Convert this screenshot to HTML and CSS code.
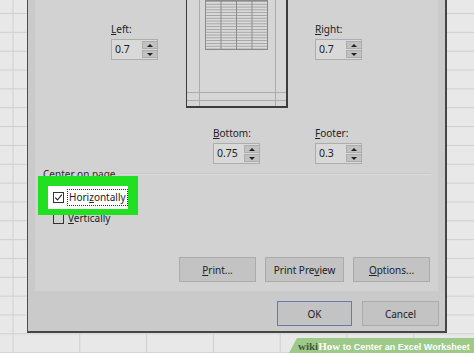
FILE: index.html
```html
<!DOCTYPE html>
<html lang="en">
<head>
    <meta charset="UTF-8">
    <meta name="viewport" content="width=device-width, initial-scale=1.0">
    <title>Page Setup - Margins</title>
    <link rel="stylesheet" href="styles.css">
</head>
<body>
    <div class="dialog">
        <div class="panel">
            <div class="row-top">
                <div class="spin spin-left">
                    <div class="spin-label"><u>L</u>eft:</div>
                    <div class="spin-box">
                        <span class="spin-value">0.7</span>
                        <span class="spin-btns"><span class="spin-up"></span><span class="spin-down"></span></span>
                    </div>
                </div>
                <div class="preview">
                    <div class="sheet"></div>
                </div>
                <div class="spin spin-right">
                    <div class="spin-label"><u>R</u>ight:</div>
                    <div class="spin-box">
                        <span class="spin-value">0.7</span>
                        <span class="spin-btns"><span class="spin-up"></span><span class="spin-down"></span></span>
                    </div>
                </div>
            </div>
            <div class="row-mid">
                <div class="spin spin-bottom">
                    <div class="spin-label"><u>B</u>ottom:</div>
                    <div class="spin-box">
                        <span class="spin-value">0.75</span>
                        <span class="spin-btns"><span class="spin-up"></span><span class="spin-down"></span></span>
                    </div>
                </div>
                <div class="spin spin-footer">
                    <div class="spin-label"><u>F</u>ooter:</div>
                    <div class="spin-box">
                        <span class="spin-value">0.3</span>
                        <span class="spin-btns"><span class="spin-up"></span><span class="spin-down"></span></span>
                    </div>
                </div>
            </div>
            <div class="group-head">
                <span class="group-title">Center on page</span>
                <span class="group-line"></span>
            </div>
            <div class="highlight">
                <div class="check-row">
                    <span class="checkbox">
                        <svg width="9" height="9" viewBox="0 0 9 9"><polyline points="1.2,4.6 3.5,7 7.8,1.6" fill="none" stroke="#222" stroke-width="1.1"/></svg>
                    </span>
                    <span class="check-label focused">Hori<u>z</u>ontally</span>
                </div>
            </div>
            <div class="check-row check-vertical">
                <span class="checkbox"></span>
                <span class="check-label"><u>V</u>ertically</span>
            </div>
            <div class="button-row">
                <button class="btn btn-print"><u>P</u>rint...</button>
                <button class="btn btn-preview">Print Pre<u>v</u>iew</button>
                <button class="btn btn-options"><u>O</u>ptions...</button>
            </div>
        </div>
        <div class="footer">
            <button class="btn btn-ok">OK</button>
            <button class="btn btn-cancel">Cancel</button>
        </div>
    </div>
    <div class="banner">
        <span class="brand-wiki">wiki</span><span class="brand-how">How</span>
        <span class="banner-title">to Center an Excel Worksheet</span>
    </div>
</body>
</html>
```

FILE: styles.css
```css
body {
    margin: 0;
    width: 474px;
    height: 353px;
    overflow: hidden;
    position: relative;
    font-family: "Noto Sans", sans-serif;
    font-size: 10px;
    color: #222;
    background-color: #e8e8e8;
    background-image:
        linear-gradient(to right, #cfcfcf 1px, transparent 1px),
        linear-gradient(to bottom, #cfcfcf 1px, transparent 1px);
    background-size: 66.8px 18.85px;
    background-position: 12.5px 13px;
}
u {
    text-decoration-thickness: 1px;
    text-underline-offset: 1px;
}
.dialog {
    margin: -20px 0 0 27px;
    width: 417px;
    background-color: #cacaca;
    border-left: 1px solid #4e4e4e;
    border-right: 2px solid #464646;
    border-bottom: 2px solid #464646;
}
.panel {
    margin: 0 7px;
    padding-bottom: 9px;
    background-color: #d2d2d2;
}
.row-top {
    display: flex;
    align-items: flex-start;
    height: 128px;
}
.spin {
    width: 47px;
}
.spin-label {
    line-height: 14px;
    height: 14px;
    margin-bottom: 3px;
    white-space: nowrap;
}
.spin-box {
    display: flex;
    box-sizing: border-box;
    height: 21px;
    border: 1px solid #adadad;
    background-color: #d9d9d9;
}
.spin-value {
    flex: 1;
    padding-left: 3px;
    line-height: 19px;
    font-size: 10.5px;
}
.spin-btns {
    width: 15px;
    display: flex;
    flex-direction: column;
    gap: 1px;
    padding: 1px 0;
}
.spin-up, .spin-down {
    flex: 1;
    display: flex;
    align-items: center;
    justify-content: center;
    background-color: #c1c1c1;
    border: 1px solid #adadad;
    border-right: none;
}
.spin-up::after, .spin-down::after {
    content: "";
    width: 0;
    height: 0;
    border-left: 3px solid transparent;
    border-right: 3px solid transparent;
}
.spin-up::after {
    border-bottom: 3px solid #222;
}
.spin-down::after {
    border-top: 3px solid #222;
}
.spin-left {
    margin: 42px 0 0 76px;
}
.spin-right {
    margin: 42px 0 0 27px;
}
.preview {
    box-sizing: border-box;
    width: 102px;
    height: 128px;
    margin-left: 28px;
    border-left: 1px solid #3c3c3c;
    border-right: 2px solid #3c3c3c;
    border-bottom: 2px solid #3c3c3c;
    background:
        linear-gradient(#acacac, #acacac) 12px 0 / 1px 100% no-repeat,
        linear-gradient(#acacac, #acacac) 88px 0 / 1px 100% no-repeat,
        linear-gradient(#acacac, #acacac) 0 112px / 100% 1px no-repeat,
        linear-gradient(#acacac, #acacac) 0 120px / 100% 1px no-repeat,
        #d6d6d6;
}
.sheet {
    box-sizing: border-box;
    width: 63px;
    height: 51px;
    margin: 19px 0 0 18px;
    border-top: 2px solid #8a8a8a;
    border-right: 1px solid #8a8a8a;
    border-bottom: 1px solid #8a8a8a;
    background-color: #dadada;
    background-image:
        linear-gradient(to right, #8c8c8c 1px, transparent 1px),
        linear-gradient(to bottom, #a2a2a2 1px, transparent 1px);
    background-size: 15.5px 100%, 100% 2.8px;
}
.row-mid {
    display: flex;
    margin-top: 18px;
}
.spin-bottom {
    margin-left: 178px;
}
.spin-footer {
    margin-left: 55px;
}
.group-head {
    display: flex;
    align-items: center;
    margin-top: 3px;
    height: 14px;
    padding-left: 8px;
}
.group-title {
    line-height: 14px;
    color: #2a2a2a;
}
.group-line {
    flex: 1;
    margin: 0 7px 0 4px;
    border-top: 1px solid #c6c6c6;
    border-bottom: 1px solid #dcdcdc;
}
.highlight {
    position: relative;
    z-index: 1;
    width: 80px;
    height: 23px;
    margin: -5px 0 0 3px;
    border: 10px solid #21e021;
    border-bottom-width: 6px;
    background-color: #fff;
    display: flex;
    align-items: center;
}
.check-row {
    display: flex;
    align-items: center;
    padding-left: 5px;
    height: 11px;
}
.checkbox {
    box-sizing: border-box;
    width: 11px;
    height: 11px;
    border: 1px solid #333;
    display: flex;
    align-items: center;
    justify-content: center;
    flex-shrink: 0;
}
.check-label {
    margin-left: 4px;
    line-height: 15px;
    white-space: nowrap;
}
.focused {
    margin-left: 3px;
    padding: 0 1px;
    border: 1px dotted #333;
}
.check-vertical {
    margin: -2px 0 0 13px;
}
.button-row {
    display: flex;
    gap: 9px;
    margin-top: 33px;
    padding-left: 144px;
}
.btn {
    box-sizing: border-box;
    height: 25px;
    padding: 0;
    border: 1px solid #ababab;
    background-color: #c3c3c3;
    font-family: "Noto Sans", sans-serif;
    font-size: 10px;
    color: #222;
}
.btn-print, .btn-options, .btn-cancel {
    width: 77px;
}
.btn-preview {
    width: 79px;
}
.btn-ok {
    width: 75px;
    border-color: #6f75ad;
}
.footer {
    display: flex;
    justify-content: flex-end;
    gap: 10px;
    height: 40px;
    box-sizing: border-box;
    padding: 10px 6px 0 0;
}
.banner {
    position: absolute;
    left: 289px;
    right: 0;
    bottom: 0;
    height: 15px;
    padding-left: 9px;
    background-color: #9dc989;
    clip-path: polygon(8px 0, 100% 0, 100% 100%, 0 100%);
    line-height: 16px;
    white-space: nowrap;
}
.brand-wiki, .brand-how {
    font-family: "Liberation Serif", serif;
    font-weight: bold;
    font-size: 11px;
}
.brand-wiki {
    color: #45573b;
}
.brand-how {
    color: #fff;
}
.banner-title {
    font-family: "Liberation Sans", sans-serif;
    font-weight: bold;
    font-size: 9px;
    color: #fff;
}
```
